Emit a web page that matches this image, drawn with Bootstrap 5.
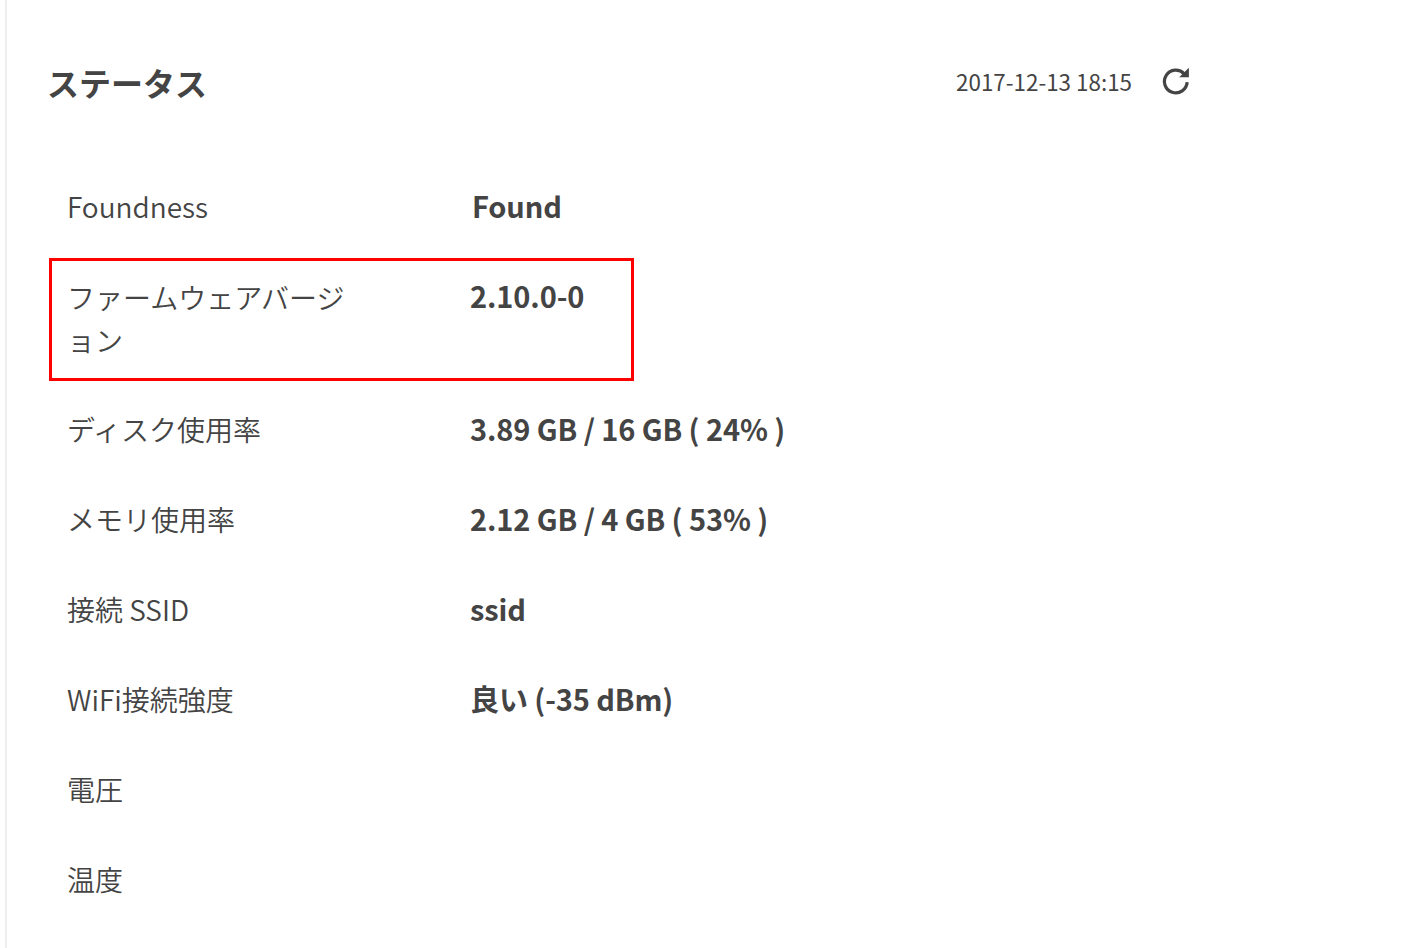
<!DOCTYPE html>
<html lang="ja">
<head>
<meta charset="utf-8">
<title>ステータス</title>
<link href="https://cdn.jsdelivr.net/npm/bootstrap@5.3.0/dist/css/bootstrap.min.css" rel="stylesheet">
<style>
html,body{height:100%;overflow:hidden;background:#fff}
body{font-family:"Noto Sans CJK JP","Noto Sans",sans-serif;color:#444;}
.pane{margin-left:5px;border-left:2px solid #eee;height:948px;padding:0 0 0 41px}
.head{width:1143px;height:149px;padding-top:58px}
.ttl{font-size:32px;font-weight:700;line-height:48px;margin:0 0 0 -1px;color:#444}
.stamp{font-size:22.4px;line-height:34px;margin-right:29px;margin-top:-2px;color:#444}
.refresh{width:30px;height:30px;margin-top:-4px}
.stampwrap{padding-top:8px}
.info{font-size:28px;line-height:43px}
.rw{height:90px;padding-left:19px;align-items:center}
.lbl{width:403px;flex:none;padding-right:100px;font-weight:350}
.val{font-weight:700;font-size:29px;letter-spacing:-.1px;margin-top:-2px}
.first{height:109px;padding-top:5px}
.first .lbl{padding-top:1px}
.first .val{padding-left:2px;margin-top:-1px}
.boxed{width:585px;height:123px;border:3px solid #f00;margin-left:1px;padding:15px 0 0 15px;align-items:flex-start;margin-bottom:3px}
</style>
</head>
<body>
<div class="pane">
  <div class="head d-flex justify-content-between align-items-start">
    <h1 class="ttl">ステータス</h1>
    <div class="stampwrap d-flex align-items-center">
      <span class="stamp">2017-12-13 18:15</span>
      <svg class="refresh" viewBox="0 0 28 28" aria-hidden="true"><path d="M21.6 8.2A10.6 10.6 0 1 0 24.4 16" fill="none" stroke="#444" stroke-width="3"/><path d="M26 2.5V11.5H17Z" fill="#444"/></svg>
    </div>
  </div>
  <div class="info">
    <div class="rw first d-flex"><div class="lbl">Foundness</div><div class="val">Found</div></div>
    <div class="rw boxed d-flex"><div class="lbl">ファームウェアバージョン</div><div class="val">2.10.0-0</div></div>
    <div class="rw d-flex"><div class="lbl">ディスク使用率</div><div class="val">3.89 GB / 16 GB ( 24% )</div></div>
    <div class="rw d-flex"><div class="lbl">メモリ使用率</div><div class="val">2.12 GB / 4 GB ( 53% )</div></div>
    <div class="rw d-flex"><div class="lbl">接続 SSID</div><div class="val">ssid</div></div>
    <div class="rw d-flex"><div class="lbl">WiFi接続強度</div><div class="val">良い (-35 dBm)</div></div>
    <div class="rw d-flex"><div class="lbl">電圧</div><div class="val"></div></div>
    <div class="rw d-flex"><div class="lbl">温度</div><div class="val"></div></div>
  </div>
</div>
<script src="https://cdn.jsdelivr.net/npm/bootstrap@5.3.0/dist/js/bootstrap.bundle.min.js"></script>
</body>
</html>
